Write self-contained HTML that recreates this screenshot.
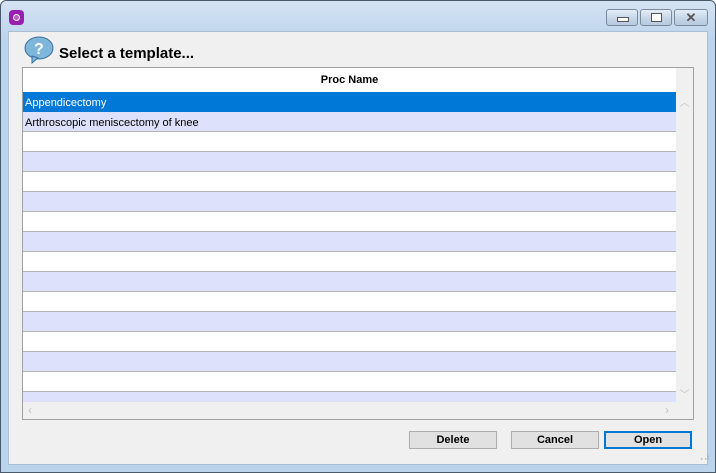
<!DOCTYPE html>
<html><head><style>
body{margin:0;width:716px;height:473px;overflow:hidden;font-family:"Liberation Sans",sans-serif;}
.win{position:absolute;left:0;top:0;width:714px;height:471px;border:1px solid #4a5a6a;border-radius:6px 6px 0 0;background:linear-gradient(#d5e3f3,#bcd3ec 40px,#bcd3ec);}
.client{position:absolute;left:8px;top:31px;width:700px;height:434px;background:#f0f0f0;border:1px solid #a9bfd6;box-sizing:border-box;}
.tb{position:absolute;top:9px;height:17px;border:1px solid #7a8ba0;border-radius:3px;background:linear-gradient(#e6eef8,#c8d7e9 50%,#b6c9df);box-sizing:border-box;}
.grid{position:absolute;left:22px;top:67px;width:672px;height:353px;border:1px solid #a0a0a0;box-sizing:border-box;background:#fff;}
.row{position:absolute;left:0;width:653px;height:20px;font-size:11px;line-height:22px;padding-left:2px;box-sizing:border-box;border-bottom:1px solid #b4b4b4;}
.btn{position:absolute;top:431px;width:88px;height:18px;border:1px solid #adadad;background:#e1e1e1;box-sizing:border-box;font-size:11px;font-weight:bold;text-align:center;line-height:16px;}
</style></head><body>
<div class="win"></div>
<div style="position:absolute;left:9px;top:10px;width:15px;height:15px;border-radius:4px;background:#9a1fb0;"><div style="position:absolute;left:4px;top:4px;width:5px;height:5px;border:1px solid #fff;border-radius:50%;background:#c05ad0"></div></div>
<div class="tb" style="left:606px;width:32px;"><div style="position:absolute;left:10px;top:7px;width:10px;height:3px;border:1px solid #555;background:#fff"></div></div>
<div class="tb" style="left:640px;width:32px;"><div style="position:absolute;left:10px;top:3px;width:9px;height:7px;border:1px solid #555;background:#fff"></div></div>
<div class="tb" style="left:674px;width:34px;font-size:13px;font-weight:bold;color:#555;text-align:center;line-height:15px;">✕</div>
<div class="client"></div>
<svg style="position:absolute;left:24px;top:36px" width="32" height="28" viewBox="0 0 32 28"><ellipse cx="15" cy="12" rx="14" ry="11" fill="#7fb6dc" stroke="#3a6e98"/><path d="M8 20 L8 27 L14 22Z" fill="#7fb6dc" stroke="#3a6e98"/><text x="10" y="18" font-size="16" font-weight="bold" fill="#fff" font-family="Liberation Sans">?</text></svg>
<div style="position:absolute;left:59px;top:45px;font-size:15px;font-weight:bold;color:#000;">Select a template...</div>
<div class="grid">
<div style="position:absolute;left:0;top:0;width:653px;height:24px;font-size:11px;font-weight:bold;text-align:center;line-height:25px;">Proc Name</div>
<div class="row" style="top:24px;background:#0078d7;color:#fff;border-bottom:1px solid #0078d7;">Appendicectomy</div>
<div class="row" style="top:44px;background:#dde1fb">Arthroscopic meniscectomy of knee</div>
<div class="row" style="top:64px"></div><div class="row" style="top:84px;background:#dde1fb"></div>
<div class="row" style="top:104px"></div><div class="row" style="top:124px;background:#dde1fb"></div>
<div class="row" style="top:144px"></div><div class="row" style="top:164px;background:#dde1fb"></div>
<div class="row" style="top:184px"></div><div class="row" style="top:204px;background:#dde1fb"></div>
<div class="row" style="top:224px"></div><div class="row" style="top:244px;background:#dde1fb"></div>
<div class="row" style="top:264px"></div><div class="row" style="top:284px;background:#dde1fb"></div>
<div class="row" style="top:304px"></div><div class="row" style="top:324px;background:#dde1fb;height:10px;border:0"></div>
<div style="position:absolute;left:653px;top:0;width:17px;height:334px;background:#f0f0f0;color:#c0c0c0;font-size:10px;text-align:center;"><div style="position:absolute;top:26px;width:17px">︿</div><div style="position:absolute;top:318px;width:17px">﹀</div></div>
<div style="position:absolute;left:0;top:334px;width:670px;height:17px;background:#f0f0f0;color:#c0c0c0;font-size:12px;"><span style="position:absolute;left:5px;top:1px">‹</span><span style="position:absolute;left:642px;top:1px">›</span></div>
</div>
<div class="btn" style="left:409px">Delete</div>
<div class="btn" style="left:511px">Cancel</div>
<div class="btn" style="left:604px;border:2px solid #0078d7;line-height:14px;">Open</div>
<div style="position:absolute;left:697px;top:452px;font-size:9px;color:#aaa;">⠠⠴</div>
</body></html>
